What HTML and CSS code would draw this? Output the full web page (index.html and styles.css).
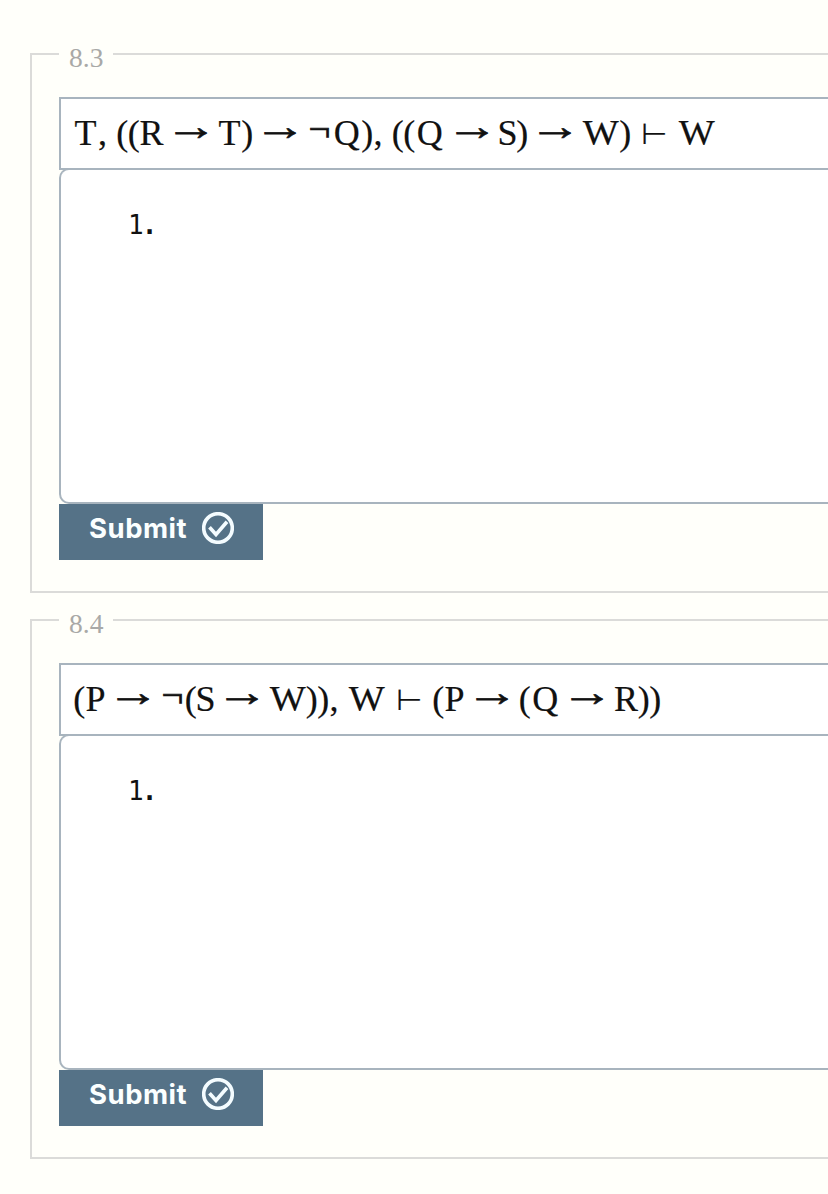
FILE: index.html
```
<!DOCTYPE html>
<html lang="en">
<head>
<meta charset="utf-8">
<title>Exercises</title>
<link rel="stylesheet" href="styles.css">
</head>
<body>
<main class="exercises">
<fieldset class="exercise">
<legend class="label">8.3</legend>
<div class="goal"><span class="t">T</span><span class="c">,</span><span class="s"> </span><span class="b">(</span><span class="b">(</span><span class="r">R</span><span class="s"> </span><span class="a">→</span><span class="s"> </span><span class="t">T</span><span class="b">)</span><span class="s"> </span><span class="a">→</span><span class="s"> </span><span class="n">¬</span><span class="q">Q</span><span class="b">)</span><span class="c">,</span><span class="s"> </span><span class="b">(</span><span class="b">(</span><span class="q">Q</span><span class="s"> </span><span class="a">→</span><span class="s"> </span><span class="l">S</span><span class="b">)</span><span class="s"> </span><span class="a">→</span><span class="s"> </span><span class="w">W</span><span class="b">)</span><span class="s"> </span><span class="v">⊢</span><span class="s"> </span><span class="w">W</span></div>
<div class="proof"><span class="line">1<b>.</b></span></div>
<button class="submit" type="button"><span>Submit</span><svg class="check" viewBox="0 0 32 32"><circle cx="16" cy="16" r="14.3"/><path d="M7.5 15.2 14 22.5 25 9.8"/></svg></button>
</fieldset>
<fieldset class="exercise">
<legend class="label">8.4</legend>
<div class="goal"><span class="b">(</span><span class="p">P</span><span class="s"> </span><span class="a">→</span><span class="s"> </span><span class="n">¬</span><span class="b">(</span><span class="l">S</span><span class="s"> </span><span class="a">→</span><span class="s"> </span><span class="w">W</span><span class="b">)</span><span class="b">)</span><span class="c">,</span><span class="s"> </span><span class="w">W</span><span class="s"> </span><span class="v">⊢</span><span class="s"> </span><span class="b">(</span><span class="p">P</span><span class="s"> </span><span class="a">→</span><span class="s"> </span><span class="b">(</span><span class="q">Q</span><span class="s"> </span><span class="a">→</span><span class="s"> </span><span class="r">R</span><span class="b">)</span><span class="b">)</span></div>
<div class="proof"><span class="line">1<b>.</b></span></div>
<button class="submit" type="button"><span>Submit</span><svg class="check" viewBox="0 0 32 32"><circle cx="16" cy="16" r="14.3"/><path d="M7.5 15.2 14 22.5 25 9.8"/></svg></button>
</fieldset>
</main>
</body>
</html>
```
FILE: styles.css
```
* { box-sizing: border-box; }
html { overflow: hidden; }
body { margin: 0; height: 1194px; overflow: hidden; background: #fffffa; }
.exercises { padding: 39px 0 0 30px; }
.exercise {
  height: 554px;
  margin: 0 0 12px;
  padding: 28px 0 0 27px;
  border: 2px solid #dbdbd9;
  border-right: 0;
}
.label {
  width: 54px;
  height: 30px;
  padding: 4px 0 0 10px;
  font: 27.5px/30px "Liberation Serif", serif;
  color: #a9a9a7;
  white-space: nowrap;
}
.goal {
  display: flex;
  height: 73px;
  padding: 0 0 0 12.5px;
  border: 2px solid #a8b4be;
  border-right: 0;
  background: #fff;
  color: #111;
  font: 36px/68px "Liberation Serif", "DejaVu Sans", serif;
  -webkit-text-stroke: 0.2px #111;
}
.goal span { display: flex; justify-content: center; flex: none; white-space: pre; }
.goal .t, .goal .r { width: 24px; }
.goal .c { width: 10px; }
.goal .s { width: 9px; }
.goal .b { width: 11.5px; }
.goal .a { width: 36px; transform: translateY(-6px) scale(1.45, 1.1); -webkit-text-stroke-width: 0.6px; }
.goal .n { width: 25px; transform: translateY(-4px) scaleX(1.08); -webkit-text-stroke-width: 0.7px; }
.goal .q { width: 29.5px; }
.goal .l { width: 18px; }
.goal .p { width: 21px; }
.goal .w { width: 37.5px; transform: scaleX(1.06); }
.goal .v { width: 29px; transform: translateY(1.5px) scale(0.84, 0.8); }
.proof {
  height: 336px;
  margin-top: -2px;
  padding: 39px 0 0 67px;
  border: 2px solid #a8b4be;
  border-right: 0;
  border-radius: 10px 0 0 10px;
  background: #fff;
}
.line {
  display: block;
  font: 26px/32px "DejaVu Sans Mono", monospace;
  letter-spacing: -2px;
  color: #111;
}
.submit {
  display: flex;
  align-items: center;
  gap: 15px;
  width: 204px;
  height: 56px;
  padding: 0 0 8px 30px;
  border: 0;
  background: #557287;
  color: #fbffff;
  font: 700 27.5px/34px Inter, sans-serif;
  letter-spacing: 0.5px;
}
.submit span { width: 98px; text-align: left; }
.check { width: 32px; height: 32px; flex: none; fill: none; stroke: #f4fcff; stroke-width: 3.6; }
```
